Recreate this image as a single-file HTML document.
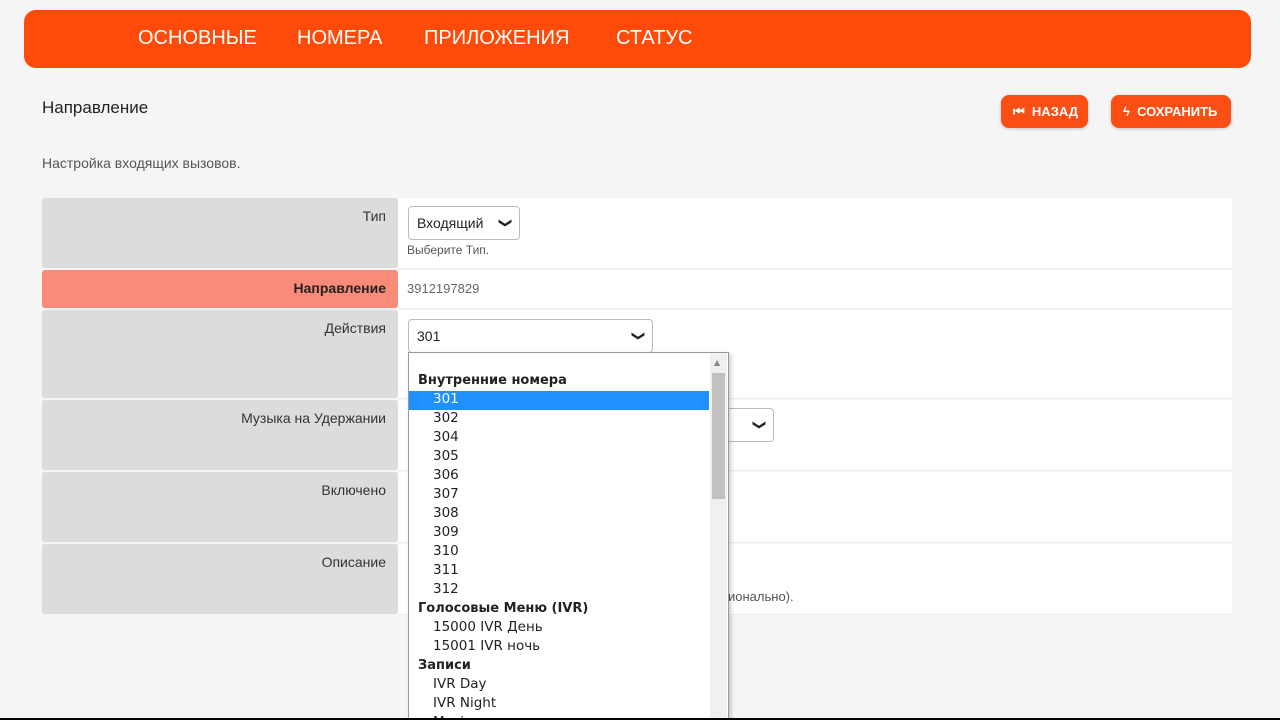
<html style="overflow:hidden;height:720px"><head><style>
html,body{overflow:hidden}
body{margin:0;width:1280px;height:720px;background:#f5f5f5;font-family:"Liberation Sans","DejaVu Sans",sans-serif;position:relative;overflow:hidden}
.hdr{position:absolute;left:24px;top:10px;width:1227px;height:58px;background:#ff4b0a;border-radius:12px}
.hdr span{position:absolute;top:17px;color:#fff;font-size:20px;}
.btn{position:absolute;top:95px;height:33px;background:#fb4e14;border-radius:8px;color:#fff;font-weight:bold;font-size:13px;line-height:33px;box-shadow:0 1px 3px rgba(0,0,0,.2)}
.abs{position:absolute}
.lab{position:absolute;left:42px;width:356px;background:#dcdcdc;border-radius:3px}
.lab span{position:absolute;right:12px;top:10px;font-size:14px;color:#333}
.row{position:absolute;left:398px;width:834px;background:#fff;border-bottom:1px solid #eee}
.sel{position:absolute;border:1px solid #bbb;border-radius:4px;background:#fff;font-size:14px;color:#222}
.dd{position:absolute;left:408px;top:352px;width:319px;height:366px;overflow:hidden;background:#fff;border:1px solid #999;box-shadow:2px 2px 4px rgba(0,0,0,.2);font-family:"DejaVu Sans",sans-serif;font-size:13.5px;color:#222}
.dd div{position:absolute;left:9px;height:19px;line-height:19px}
.dd .g{font-weight:bold;font-size:13px}
.dd .i{left:24px}
.chev{position:absolute;font-size:13px;transform:rotate(90deg)}
</style></head><body>
<div class="hdr"><span style="left:114px">ОСНОВНЫЕ</span><span style="left:273px">НОМЕРА</span><span style="left:400px">ПРИЛОЖЕНИЯ</span><span style="left:592px">СТАТУС</span></div>
<div class="abs" style="left:42px;top:98px;font-size:17px;color:#222">Направление</div>
<div class="btn" style="left:1001px;width:87px"><span style="margin-left:12px">⏮&nbsp; НАЗАД</span></div>
<div class="btn" style="left:1111px;width:120px"><span style="margin-left:12px">ϟ&nbsp; СОХРАНИТЬ</span></div>
<div class="abs" style="left:42px;top:155px;font-size:14px;color:#555">Настройка входящих вызовов.</div>

<div class="row" style="top:198px;height:70px"></div>
<div class="row" style="top:270px;height:38px"></div>
<div class="row" style="top:310px;height:88px"></div>
<div class="row" style="top:400px;height:70px"></div>
<div class="row" style="top:472px;height:70px"></div>
<div class="row" style="top:544px;height:70px"></div>
<div class="lab" style="top:198px;height:70px"><span>Тип</span></div>
<div class="lab" style="top:270px;height:38px;background:#f98b78"><span style="font-weight:bold;color:#222">Направление</span></div>
<div class="lab" style="top:310px;height:88px"><span>Действия</span></div>
<div class="lab" style="top:400px;height:70px"><span>Музыка на Удержании</span></div>
<div class="lab" style="top:472px;height:70px"><span>Включено</span></div>
<div class="lab" style="top:544px;height:70px"><span>Описание</span></div>

<div class="sel" style="left:408px;top:206px;width:110px;height:32px;line-height:32px"><span style="margin-left:8px">Входящий</span><span class="chev" style="right:8px">❯</span></div>
<div class="abs" style="left:407px;top:243px;font-size:12px;color:#555">Выберите Тип.</div>
<div class="abs" style="left:407px;top:281px;font-size:13px;color:#666">3912197829</div>
<div class="sel" style="left:408px;top:319px;width:243px;height:32px;line-height:32px"><span style="margin-left:8px">301</span><span class="chev" style="right:8px">❯</span></div>
<div class="sel" style="left:700px;top:408px;width:72px;height:32px;line-height:32px"><span class="chev" style="right:8px">❯</span></div>
<div class="abs" style="left:728px;top:589px;font-size:13px;color:#555">ионально).</div>

<div class="dd">
<div style="left:301px;top:0;width:17px;height:368px;background:#f0f0f0"></div>
<div style="left:303px;top:20px;width:13px;height:126px;background:#c1c1c1"></div>
<div style="left:305px;top:0;font-size:8px;color:#888">▲</div>
<div style="left:0;top:38px;width:300px;height:19px;background:#1e90ff"></div>
<div class="g" style="top:18px">Внутренние номера</div>
<div class="i" style="top:37px;color:#fff">301</div>
<div class="i" style="top:56px">302</div>
<div class="i" style="top:75px">304</div>
<div class="i" style="top:94px">305</div>
<div class="i" style="top:113px">306</div>
<div class="i" style="top:132px">307</div>
<div class="i" style="top:151px">308</div>
<div class="i" style="top:170px">309</div>
<div class="i" style="top:189px">310</div>
<div class="i" style="top:208px">311</div>
<div class="i" style="top:227px">312</div>
<div class="g" style="top:246px">Голосовые Меню (IVR)</div>
<div class="i" style="top:265px">15000 IVR День</div>
<div class="i" style="top:284px">15001 IVR ночь</div>
<div class="g" style="top:303px">Записи</div>
<div class="i" style="top:322px">IVR Day</div>
<div class="i" style="top:341px">IVR Night</div>
<div class="i" style="top:360px">Music</div>
</div>
<div class="abs" style="left:0;top:718px;width:1280px;height:2px;background:#000"></div>
</body></html>
